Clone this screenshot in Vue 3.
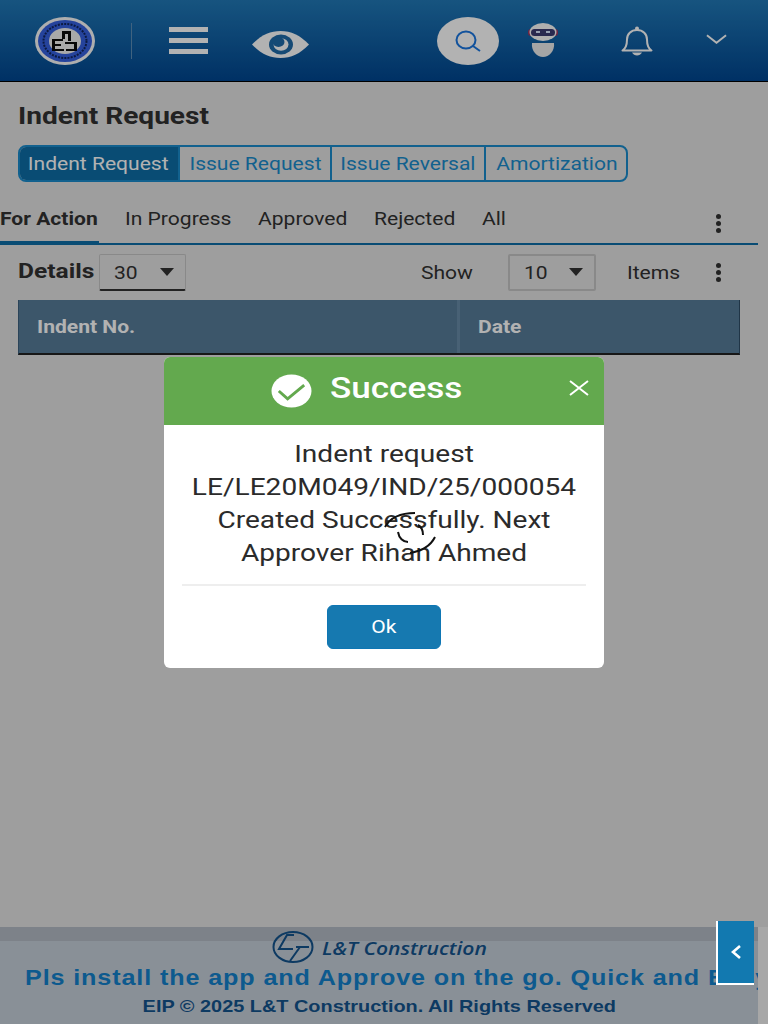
<template>
  <div class="page">
    <header class="topbar">
      <svg class="logo" viewBox="0 0 60 48" aria-hidden="true">
        <ellipse cx="30" cy="24" rx="30" ry="24" fill="#fafafa" />
        <ellipse cx="30" cy="24" rx="27" ry="21" fill="#3560e0" />
        <ellipse cx="30" cy="24" rx="21.500" ry="17" fill="none" stroke="#12265e" stroke-width="2" stroke-dasharray="2 1.200" />
        <ellipse cx="30" cy="24" rx="16" ry="13" fill="#f2f2f2" />
        <path d="M17 22h11v2h-8v3h6v2h-6v3h9v2H17zM27 14h9v10h-3v-7h-3v5h-3zM30 25h12v9H31v-2h8v-5h-9z" fill="#0c0c0c" />
      </svg>
      <span class="rule"></span>
      <span class="burger"><i></i><i></i><i></i></span>
      <svg class="eye" viewBox="0 0 57 27" aria-hidden="true">
        <path d="M0 13.500C9 4 18 0 28.500 0S48 4 57 13.500C48 23 39 27 28.500 27S9 23 0 13.500Z" fill="#fff" />
        <ellipse cx="29" cy="13.500" rx="12" ry="10" fill="#1f6aa8" />
        <ellipse cx="29" cy="13.500" rx="7.500" ry="6.200" fill="#fff" />
        <ellipse cx="26.500" cy="11" rx="6" ry="5" fill="#1f6aa8" />
      </svg>
      <span class="search">
        <svg viewBox="0 0 26 22" aria-hidden="true">
          <ellipse cx="11" cy="10" rx="9.500" ry="8.500" fill="none" stroke="#1a76e0" stroke-width="2" />
          <path d="M18 16l7 5" stroke="#1a76e0" stroke-width="2" fill="none" />
        </svg>
      </span>
      <svg class="robot" viewBox="0 0 30 36" aria-hidden="true">
        <rect x="0" y="6" width="30" height="7" rx="3" fill="#a3355f" />
        <ellipse cx="15" cy="9" rx="13.500" ry="9" fill="#fbfbfb" />
        <rect x="3" y="6" width="24" height="7" rx="3.500" fill="#3b3b72" />
        <rect x="8" y="8" width="4" height="2" fill="#d7e6ff" />
        <rect x="18" y="8" width="4" height="2" fill="#d7e6ff" />
        <path d="M4 20h22c1 8-5 14-11 14S3 28 4 20Z" fill="#ececec" />
      </svg>
      <svg class="bell" viewBox="0 0 32 30" aria-hidden="true">
        <circle cx="16" cy="2.500" r="2" fill="#fff" />
        <path d="M1.500 24.500c4-2.500 4.500-6 4.500-11C6 8 10 4 16 4s10 4 10 9.500c0 5 .5 8.500 4.500 11Z" fill="none" stroke="#fff" stroke-width="2" stroke-linejoin="round" />
        <path d="M11 26.500h10c-1 2-3 3-5 3s-4-1-5-3Z" fill="#fff" />
      </svg>
      <svg class="caret" viewBox="0 0 22 10" aria-hidden="true">
        <path d="M1 1l10 8 10-8" fill="none" stroke="#fff" stroke-width="2" />
      </svg>
    </header>

    <main class="content">
      <h1><span class="wide">Indent Request</span></h1>

      <div class="segments">
        <button
          v-for="(item, i) in segments"
          :key="item.label"
          type="button"
          class="segment"
          :class="{ 'is-active': i === 0 }"
          :style="{ width: item.width + 'px' }"
        ><span class="wide wide-mid">{{ item.label }}</span></button>
      </div>

      <nav class="tabs">
        <span
          v-for="(tab, i) in tabs"
          :key="tab.label"
          class="tab"
          :class="{ 'is-active': i === 0 }"
          :style="{ width: tab.width + 'px' }"
        ><span class="wide">{{ tab.label }}</span></span>
        <span class="dots tabs-dots"><i></i><i></i><i></i></span>
      </nav>

      <div class="filters">
        <strong class="details"><span class="wide">Details</span></strong>
        <span class="picker picker-dark"><span class="wide">30</span><b></b></span>
        <span class="show"><span class="wide">Show</span></span>
        <span class="picker picker-plain"><span class="wide">10</span><b></b></span>
        <span class="items"><span class="wide">Items</span></span>
        <span class="dots"><i></i><i></i><i></i></span>
      </div>

      <div class="table-head">
        <div class="cell cell-no"><span class="wide">Indent No.</span></div>
        <div class="cell"><span class="wide">Date</span></div>
      </div>
    </main>

    <footer class="footer">
      <div class="brand">
        <svg viewBox="0 0 42 32" aria-hidden="true">
          <ellipse cx="21" cy="16" rx="19.500" ry="15" fill="none" stroke="#13538d" stroke-width="2" />
          <path d="M22 4h-7L7 18h14M24 16h13M28 16 18 30" fill="none" stroke="#13538d" stroke-width="2" />
        </svg>
        <span class="brand-name"><span class="wide">L&amp;T Construction</span></span>
      </div>
      <div class="notice"><span class="wide">Pls install the app and Approve on the go. Quick and Easy</span></div>
      <div class="copy"><span class="wide wide-mid">EIP © 2025 L&amp;T Construction. All Rights Reserved</span></div>
    </footer>

    <div class="overlay"></div>

    <section class="modal">
      <div class="modal-head">
        <svg class="tick" viewBox="0 0 42 34" aria-hidden="true">
          <ellipse cx="21" cy="17" rx="20.500" ry="17" fill="#fff" />
          <path d="M8 17l9 8 17-14" fill="none" stroke="#63a94e" stroke-width="3" />
        </svg>
        <span class="modal-title"><span class="wide">Success</span></span>
        <svg class="close" viewBox="0 0 20 16" aria-hidden="true">
          <path d="M1 1l18 14M19 1 1 15" stroke="#fff" stroke-width="2" fill="none" />
        </svg>
      </div>
      <p class="modal-text">
        Indent request<br />LE/LE20M049/IND/25/000054<br />Created Successfully. Next<br />Approver Rihan Ahmed
      </p>
      <div class="modal-foot">
        <button type="button" class="ok"><span class="wide wide-mid">Ok</span></button>
      </div>
    </section>

    <svg class="spinner" viewBox="0 0 54 42" aria-hidden="true">
      <path d="M1 15C6 6 15 1 31 1M51 25C47 33 38 39 26 41" fill="none" stroke="#111" stroke-width="2" />
      <path d="M14 20C15 26 19 30 24 30M34 13C38 15 39 19 39 23" fill="none" stroke="#111" stroke-width="2" />
    </svg>

    <button type="button" class="side-toggle" aria-label="Collapse">
      <svg viewBox="0 0 12 16" aria-hidden="true">
        <path d="M10 2 3 8l7 6" fill="none" stroke="#fff" stroke-width="2.600" />
      </svg>
    </button>
  </div>
</template>

<script setup>
const segments = [
  { label: 'Indent Request', width: 162 },
  { label: 'Issue Request', width: 152 },
  { label: 'Issue Reversal', width: 154 },
  { label: 'Amortization', width: 142 },
]

const tabs = [
  { label: 'For Action', width: 99 },
  { label: 'In Progress', width: 106 },
  { label: 'Approved', width: 89 },
  { label: 'Rejected', width: 81 },
  { label: 'All', width: 23 },
]
</script>

<style>
html,
body {
  margin: 0;
  background: #e3e3e3;
}
</style>

<style scoped>
.page {
  position: relative;
  display: flex;
  flex-direction: column;
  width: 768px;
  height: 1024px;
  overflow: hidden;
  background: #e3e3e3;
  color: #313131;
  font-family: Roboto, "Liberation Sans", sans-serif;
}

/* the whole capture is stretched sideways, text included */
.wide {
  display: inline-block;
  transform: scaleX(1.17);
  transform-origin: left center;
  white-space: nowrap;
}

.wide-mid {
  transform-origin: center;
}

.topbar {
  display: flex;
  flex: 0 0 auto;
  align-items: center;
  box-sizing: border-box;
  height: 82px;
  padding: 0 0 0 35px;
  background: linear-gradient(#2179b7, #004690);
  border-bottom: 1px solid #000;
}

.logo {
  width: 60px;
  height: 48px;
  flex: 0 0 auto;
}

.rule {
  width: 1px;
  height: 36px;
  margin: 0 37px 0 36px;
  background: #5c8fb8;
}

.burger {
  display: flex;
  flex-direction: column;
  gap: 5.500px;
  width: 39px;
}

.burger i {
  display: block;
  height: 5.500px;
  background: #fff;
}

.eye {
  width: 57px;
  height: 27px;
  margin: 7px 0 0 44px;
}

.search {
  display: flex;
  align-items: center;
  justify-content: center;
  width: 62px;
  height: 48px;
  margin: 0 0 0 128px;
  border-radius: 50%;
  background: #fff;
}

.search svg {
  width: 26px;
  height: 22px;
}

.robot {
  width: 30px;
  height: 36px;
  margin: 0 0 0 29px;
}

.bell {
  width: 32px;
  height: 30px;
  margin: 0 0 0 63px;
}

.caret {
  width: 21px;
  height: 10px;
  margin: -4px 0 0 53px;
}

.content {
  flex: 1 1 auto;
  width: 758px;
}

h1 {
  margin: 19px 0 0 18px;
  font-size: 24px;
  line-height: 30px;
  font-weight: 700;
}

.segments {
  display: flex;
  box-sizing: border-box;
  width: 610px;
  height: 37px;
  margin: 14px 0 0 18px;
  border: 2px solid #1a8ccc;
  border-radius: 8px;
  overflow: hidden;
}

.segment {
  flex: 0 0 auto;
  box-sizing: border-box;
  height: 33px;
  margin: 0;
  padding: 0;
  border: 0;
  border-right: 2px solid #1a8ccc;
  background: transparent;
  color: #1a8ccc;
  font: 400 18px/33px Roboto, "Liberation Sans", sans-serif;
}

.segment:last-child {
  border-right: 0;
}

.segment:first-child {
  margin-left: -2px;
}

.segment.is-active {
  background: #0e6ea7;
  color: #fff;
}

.tabs {
  display: flex;
  box-sizing: border-box;
  height: 45px;
  margin-top: 18px;
  border-bottom: 2px solid #0e6ea7;
}

.tab {
  flex: 0 0 auto;
  margin-right: 27px;
  font-size: 18px;
  line-height: 38px;
}

.tab.is-active {
  box-sizing: border-box;
  height: 45px;
  margin-right: 26px;
  border-bottom: 4px solid #0e6ea7;
  font-weight: 700;
}

.dots {
  display: flex;
  flex-direction: column;
  gap: 2px;
  margin-left: 37px;
}

.dots i {
  display: block;
  width: 5px;
  height: 5px;
  border-radius: 50%;
  background: #313131;
}

.tabs-dots {
  align-self: flex-start;
  margin: 14px 0 0 184px;
}

.filters {
  display: flex;
  align-items: center;
  height: 38px;
  margin: 8px 0 0 18px;
}

.details {
  flex: 0 0 auto;
  width: 81px;
  margin-top: -3px;
  font-size: 21px;
}

.picker {
  display: flex;
  flex: 0 0 auto;
  align-items: center;
  justify-content: space-between;
  box-sizing: border-box;
  height: 37px;
  padding: 1px 11px 0 14px;
  border: 1px solid #c4c4c4;
  border-radius: 2px;
  font-size: 18px;
}

.picker b {
  width: 0;
  height: 0;
  border-left: 7px solid transparent;
  border-right: 7px solid transparent;
  border-top: 8px solid #313131;
}

.picker-dark {
  width: 87px;
  border-bottom: 2px solid #313131;
}

.picker-plain {
  width: 88px;
  margin-left: 36px;
  border-width: 2px;
  padding-top: 0;
}

.show {
  flex: 0 0 auto;
  width: 51px;
  margin-left: 235px;
  font-size: 18px;
}

.items {
  flex: 0 0 auto;
  width: 52px;
  margin-left: 31px;
  font-size: 18px;
}

.table-head {
  display: flex;
  box-sizing: border-box;
  width: 722px;
  height: 55px;
  margin: 9px 0 0 18px;
  background: #567b99;
  border-bottom: 2px solid #222;
  border-left: 1px solid #3e6280;
  border-right: 1px solid #2e4c66;
}

.cell {
  flex: 1 1 auto;
  padding: 0 0 0 18px;
  color: #fff;
  font-size: 18px;
  line-height: 53px;
  font-weight: 700;
}

.cell-no {
  flex: 0 0 auto;
  box-sizing: border-box;
  width: 441px;
  border-right: 3px solid #688ba8;
}

.footer {
  flex: 0 0 auto;
  box-sizing: border-box;
  width: 768px;
  height: 97px;
  overflow: hidden;
  border-right: 10px solid #f0f0f0;
  background: linear-gradient(#b3bac4 14px, #c5cfd9 14px);
  text-align: center;
}

.brand {
  display: flex;
  align-items: center;
  justify-content: center;
  gap: 8px;
  box-sizing: border-box;
  height: 38px;
  padding-top: 4px;
  color: #13538d;
  font: italic 600 18px/32px "Open Sans", sans-serif;
}

.brand svg {
  width: 42px;
  height: 32px;
  margin-top: -3px;
}

.brand-name {
  width: 164px;
  text-align: left;
}

.notice {
  width: 800px;
  margin: 1px 0 0 25px;
  color: #1381cc;
  font: 700 21.500px/24px "Liberation Sans", sans-serif;
  letter-spacing: .75px;
  text-align: left;
  white-space: nowrap;
}

.copy {
  margin: 7px 0 0;
  color: #13538d;
  font: 700 17px/20px "Liberation Sans", sans-serif;
}

.overlay {
  position: absolute;
  inset: 0;
  background: rgba(0, 0, 0, .3);
}

.modal {
  position: absolute;
  top: 357px;
  left: 164px;
  box-sizing: border-box;
  width: 440px;
  height: 311px;
  overflow: hidden;
  background: #fff;
  border-radius: 6px;
}

.modal-head {
  position: relative;
  display: flex;
  align-items: center;
  justify-content: center;
  height: 68px;
  padding-right: 36px;
  background: #63a94e;
  color: #fff;
}

.tick {
  width: 41px;
  height: 34px;
  margin-right: 18px;
}

.modal-title {
  width: 132px;
  margin-top: -7px;
  font-size: 30px;
  font-weight: 500;
}

.close {
  position: absolute;
  top: 23px;
  right: 15px;
  width: 20px;
  height: 16px;
}

.modal-text {
  margin: 13px 0 0;
  color: #2b2b2b;
  font-size: 24px;
  line-height: 33px;
  text-align: center;
  transform: scaleX(1.17);
}

.modal-foot {
  display: flex;
  justify-content: center;
  margin: 14px 18px 0;
  padding-top: 19px;
  border-top: 2px solid #eee;
}

.ok {
  box-sizing: border-box;
  width: 114px;
  height: 44px;
  padding: 0;
  border: 1px solid #0e76b4;
  border-radius: 6px;
  background: #1679b0;
  color: #fff;
  font: 400 18px/40px Roboto, "Liberation Sans", sans-serif;
}

.spinner {
  position: absolute;
  top: 512px;
  left: 384px;
  width: 54px;
  height: 42px;
}

.side-toggle {
  position: absolute;
  top: 921px;
  left: 716px;
  display: flex;
  align-items: center;
  justify-content: center;
  box-sizing: border-box;
  width: 38px;
  height: 64px;
  padding: 0;
  border: 0;
  border-left: 2px solid #fff;
  border-bottom: 2px solid #fff;
  background: #1279b0;
}

.side-toggle svg {
  width: 12px;
  height: 16px;
}
</style>
